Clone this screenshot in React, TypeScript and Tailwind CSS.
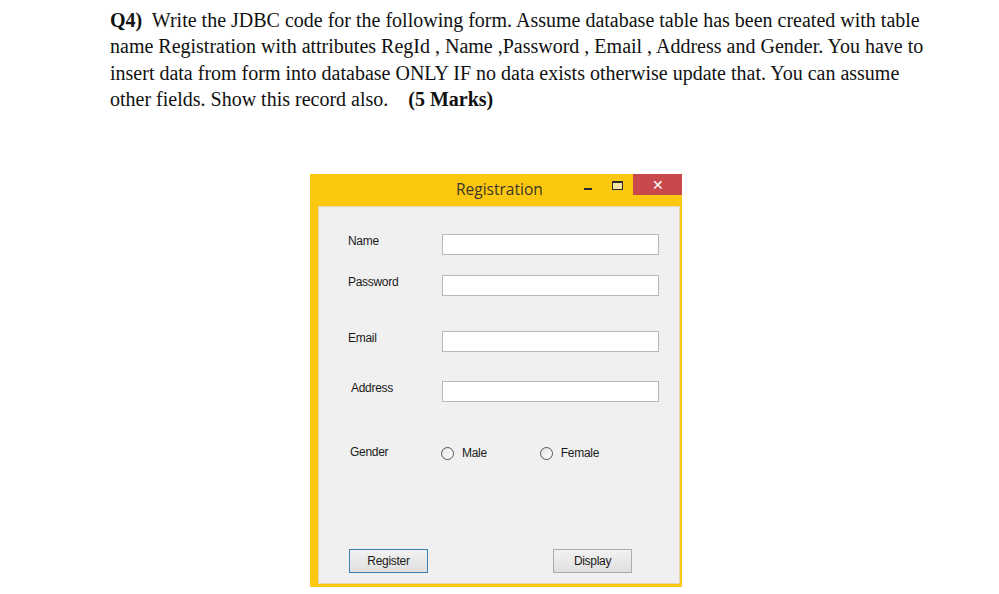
import React from 'react';

const Field: React.FC<{ label: string; indent?: string }> = ({ label, indent = 'pl-0' }) => (
  <div className="flex items-start">
    <span className={`w-[94px] text-[12px] leading-[14px] tracking-[-0.3px] text-[#1a1a1a] ${indent}`}>{label}</span>
    <div className="w-[217px] h-[21px] bg-white border border-[#b8b8b8]" />
  </div>
);

const Radio: React.FC<{ label: string }> = ({ label }) => (
  <div className="flex items-center">
    <span className="w-[13px] h-[13px] rounded-full border border-[#555] bg-gradient-to-br from-[#e2e2e2] to-white" />
    <span className="ml-[8px] text-[12px] leading-[14px] tracking-[-0.3px] text-[#1a1a1a]">{label}</span>
  </div>
);

const App: React.FC = () => {
  return (
    <div className="w-[999px] h-[594px] bg-white overflow-hidden flex flex-col">
      <div className="pl-[110px] pt-[7px] text-[20px] leading-[26.3px] text-[#111] font-['Liberation_Serif',serif]">
        <p><b>Q4)</b>&nbsp; Write the JDBC code for the following form. Assume database table has been created with table</p>
        <p>name Registration with attributes RegId , Name ,Password , Email , Address and Gender. You have to</p>
        <p>insert data from form into database ONLY IF no data exists otherwise update that. You can assume</p>
        <p>other fields. Show this record also.<span className="ml-[20px] font-bold">(5 Marks)</span></p>
      </div>

      <div className="ml-[310px] mt-[62px] w-[372px] h-[413px] bg-[#fcc80f] flex flex-col font-['Liberation_Sans',Arial,sans-serif]">
        <div className="h-[32px] flex items-start">
          <span className="ml-[146px] mt-[5px] text-[15.5px] leading-[20px] text-[#3b3528] font-['Open_Sans',sans-serif]">Registration</span>
          <div className="ml-auto flex items-start">
            <span className="mt-[14px] w-[8px] h-[2px] bg-[#2a2a2a]" />
            <span className="ml-[20px] mt-[7px] w-[11px] h-[9px] border border-[#2a2a2a] border-t-2 bg-[#f3e3a0]" />
            <span className="ml-[10px] w-[49px] h-[21px] bg-[#c9484c] flex items-center justify-center text-white text-[14px] leading-none">✕</span>
          </div>
        </div>
        <div className="flex-1 ml-[8px] mr-[2px] mb-[3px] bg-[#f0f0f0] border border-[#e2d7b0] flex flex-col pl-[29px] pt-[27px]">
          <Field label="Name" />
          <div className="mt-[20px]"><Field label="Password" /></div>
          <div className="mt-[35px]"><Field label="Email" /></div>
          <div className="mt-[29px]"><Field label="Address" indent="pl-[3px]" /></div>
          <div className="mt-[43px] flex items-start">
            <span className="w-[94px] pl-[2px] text-[12px] leading-[14px] tracking-[-0.3px] text-[#1a1a1a]">Gender</span>
            <div className="mt-[1px] flex items-center">
              <span className="-ml-[1px]"><Radio label="Male" /></span>
              <div className="ml-[53px]"><Radio label="Female" /></div>
            </div>
          </div>
          <div className="mt-[89px] flex items-start">
            <button className="ml-[1px] w-[79px] h-[24px] border border-[#3c7fb1] bg-gradient-to-b from-[#f2f2f2] to-[#dfdfdf] text-[12px] tracking-[-0.3px] text-[#1a1a1a]">Register</button>
            <button className="ml-[125px] w-[79px] h-[24px] border border-[#acacac] bg-gradient-to-b from-[#f2f2f2] to-[#dfdfdf] text-[12px] tracking-[-0.3px] text-[#1a1a1a]">Display</button>
          </div>
        </div>
      </div>
    </div>
  );
};

export default App;
